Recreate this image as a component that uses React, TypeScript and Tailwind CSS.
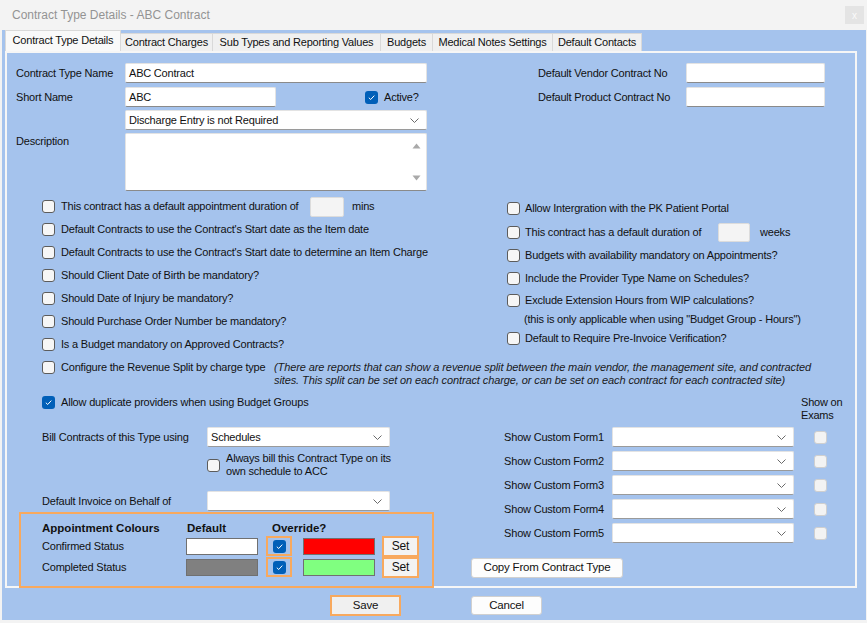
import React from "react";

const ORANGE = "border-[#f8a95e]";

function Check({ checked, disabled }: { checked?: boolean; disabled?: boolean }) {
  if (checked)
    return (
      <span className="w-[13px] h-[13px] rounded-[3px] bg-[#005fb8] flex items-center justify-center shrink-0">
        <svg width="9" height="9" viewBox="0 0 9 9">
          <path d="M1.8 4.7 L3.7 6.5 L7.3 2.6" fill="none" stroke="#ffffff" strokeWidth="1" />
        </svg>
      </span>
    );
  if (disabled)
    return <span className="block w-[13px] h-[13px] rounded-[3px] border border-[#cfcfcf] bg-[#f3f3f3] shrink-0" />;
  return <span className="block w-[13px] h-[13px] rounded-[3px] border border-[#5c5c5c] bg-[#f6f6f6] shrink-0" />;
}

function Input({ w, value, h = "h-[20px]" }: { w: string; value?: string; h?: string }) {
  return (
    <div className={`${w} ${h} bg-white border border-[#e3e3e3] border-b-[#8a8a8a] rounded-[2px] flex items-center pl-[3px] shrink-0`}>
      {value}
    </div>
  );
}

function Chevron() {
  return (
    <svg width="9" height="5" viewBox="0 0 9 5" className="shrink-0">
      <polyline points="0.5,0.5 4.5,4.5 8.5,0.5" fill="none" stroke="#6a6a6a" strokeWidth="1" />
    </svg>
  );
}

function Select({ w, value }: { w: string; value?: string }) {
  return (
    <div className={`${w} h-[20px] bg-white border border-[#e3e3e3] border-b-[#9a9a9a] rounded-[2px] flex items-center pl-[3px] pr-[7px] shrink-0`}>
      <span className="flex-1">{value}</span>
      <Chevron />
    </div>
  );
}

function Row({ children, h = "h-[23px]" }: { children: React.ReactNode; h?: string }) {
  return <div className={`${h} flex items-center`}>{children}</div>;
}

function CheckRow({ label, checked }: { label: string; checked?: boolean }) {
  return (
    <Row>
      <Check checked={checked} />
      <span className="ml-[6px] whitespace-nowrap">{label}</span>
    </Row>
  );
}

function Tab({ label, w, selected }: { label: string; w: string; selected?: boolean }) {
  if (selected)
    return (
      <div className={`${w} h-[21px] pb-[2px] bg-[#f9f9f9] border border-[#d9d9d9] border-b-0 flex items-center justify-center shrink-0 whitespace-nowrap`}>
        {label}
      </div>
    );
  return (
    <div className={`${w} h-[18px] bg-[#f0f0f0] border border-[#d9d9d9] border-b-0 border-l-0 flex items-center justify-center shrink-0 whitespace-nowrap`}>
      {label}
    </div>
  );
}

function Swatch({ color }: { color: string }) {
  return <div className={`w-[72px] h-[17px] border border-[#707070] shrink-0 ${color}`} />;
}

function ColourRow({ label, def, over }: { label: string; def: string; over: string }) {
  return (
    <div className="h-[20px] flex items-center">
      <span className="w-[144px] shrink-0">{label}</span>
      <Swatch color={def} />
      <div className={`ml-[8px] w-[26px] h-[20px] border-2 ${ORANGE} flex items-center justify-center shrink-0`}>
        <Check checked />
      </div>
      <div className="ml-[11px]">
        <Swatch color={over} />
      </div>
      <div className={`ml-[7px] w-[37px] h-[21px] border-2 ${ORANGE} bg-[#f3f3f3] flex items-center justify-center shrink-0 text-[12px]`}>
        Set
      </div>
    </div>
  );
}

function FormRow({ n }: { n: number }) {
  return (
    <div className="h-[20px] flex items-center">
      <span className="w-[133px] text-right shrink-0">Show Custom Form{n}</span>
      <div className="ml-[8px]">
        <Select w="w-[182px]" />
      </div>
      <div className="ml-[20px]">
        <Check disabled />
      </div>
    </div>
  );
}

export default function App() {
  return (
    <div className="w-[867px] h-[623px] bg-[#f3f3f3] flex flex-col font-['Liberation_Sans',Arial,sans-serif] text-[11px] tracking-[-0.2px] text-[#111] overflow-hidden">
      {/* Title bar */}
      <div className="h-[30px] flex items-center pl-[12px] pr-[3px] shrink-0 tracking-normal">
        <span className="text-[12px] text-[#939393]">Contract Type Details - ABC Contract</span>
        <div className="ml-auto w-[19px] h-[18px] bg-[#e4e4e4] flex items-center justify-center text-[10px] text-[#fafafa]">x</div>
      </div>

      {/* Body */}
      <div className="flex-1 ml-[2px] mr-[1px] mb-[3px] bg-[#a5c3ed] flex flex-col">
        {/* Tabs */}
        <div className="h-[21px] pl-[3px] flex items-end shrink-0">
          <Tab label="Contract Type Details" w="w-[116px]" selected />
          <Tab label="Contract Charges" w="w-[92px]" />
          <Tab label="Sub Types and Reporting Values" w="w-[168px]" />
          <Tab label="Budgets" w="w-[52px]" />
          <Tab label="Medical Notes Settings" w="w-[120px]" />
          <Tab label="Default Contacts" w="w-[89px]" />
        </div>

        {/* Panel */}
        <div className="ml-[3px] w-[852px] h-[537px] border-2 border-[#f6f6f6] flex flex-col shrink-0">
          {/* Section A */}
          <div className="mt-[10px] flex">
            <div className="pl-[9px] flex flex-col">
              <div className="h-[20px] flex items-center">
                <span className="w-[109px] shrink-0">Contract Type Name</span>
                <Input w="w-[302px]" value="ABC Contract" />
              </div>
              <div className="mt-[4px] h-[20px] flex items-center">
                <span className="w-[109px] shrink-0">Short Name</span>
                <Input w="w-[151px]" value="ABC" />
                <div className="ml-[89px]">
                  <Check checked />
                </div>
                <span className="ml-[6px]">Active?</span>
              </div>
              <div className="mt-[3px] pl-[109px]">
                <Select w="w-[302px]" value="Discharge Entry is not Required" />
              </div>
              <div className="mt-[3px] flex items-start">
                <span className="w-[109px] shrink-0 leading-[16px]">Description</span>
                <div className="w-[302px] h-[58px] bg-white border border-[#e3e3e3] border-b-[#8a8a8a] rounded-[2px] flex justify-end pr-[5px] py-[9px]">
                  <div className="flex flex-col justify-between items-center">
                    <svg width="9" height="6" viewBox="0 0 9 6">
                      <polygon points="0.5,5.5 4.5,0.5 8.5,5.5" fill="#a9a9a9" />
                    </svg>
                    <svg width="9" height="6" viewBox="0 0 9 6">
                      <polygon points="0.5,0.5 8.5,0.5 4.5,5.5" fill="#a9a9a9" />
                    </svg>
                  </div>
                </div>
              </div>
            </div>
            <div className="ml-[111px] flex flex-col">
              <div className="h-[20px] flex items-center">
                <span className="w-[148px] shrink-0">Default Vendor Contract No</span>
                <Input w="w-[139px]" />
              </div>
              <div className="mt-[4px] h-[20px] flex items-center">
                <span className="w-[148px] shrink-0">Default Product Contract No</span>
                <Input w="w-[139px]" />
              </div>
            </div>
          </div>

          {/* Section B */}
          <div className="mt-[4px] flex">
            <div className="pl-[35px] w-[500px] flex flex-col shrink-0">
              <Row>
                <Check />
                <span className="ml-[6px] w-[249px] whitespace-nowrap">This contract has a default appointment duration of</span>
                <div className="w-[34px] h-[20px] bg-[#f4f4f4] border border-[#dcdcdc] rounded-[2px]" />
                <span className="ml-[8px]">mins</span>
              </Row>
              <CheckRow label="Default Contracts to use the Contract's Start date as the Item date" />
              <CheckRow label="Default Contracts to use the Contract's Start date to determine an Item Charge" />
              <CheckRow label="Should Client Date of Birth be mandatory?" />
              <CheckRow label="Should Date of Injury be mandatory?" />
              <CheckRow label="Should Purchase Order Number be mandatory?" />
              <CheckRow label="Is a Budget mandatory on Approved Contracts?" />
            </div>
            <div className="mt-[1px] flex flex-col">
              <Row h="h-[24px]">
                <Check />
                <span className="ml-[5px] whitespace-nowrap">Allow Intergration with the PK Patient Portal</span>
              </Row>
              <Row h="h-[24px]">
                <Check />
                <span className="ml-[5px] w-[193px] whitespace-nowrap">This contract has a default duration of</span>
                <div className="w-[32px] h-[19px] bg-[#f4f4f4] border border-[#dcdcdc] rounded-[2px]" />
                <span className="ml-[10px]">weeks</span>
              </Row>
              <Row>
                <Check />
                <span className="ml-[5px] whitespace-nowrap">Budgets with availability mandatory on Appointments?</span>
              </Row>
              <Row h="h-[22px]">
                <Check />
                <span className="ml-[5px] whitespace-nowrap">Include the Provider Type Name on Schedules?</span>
              </Row>
              <Row h="h-[22px]">
                <Check />
                <span className="ml-[5px] whitespace-nowrap">Exclude Extension Hours from WIP calculations?</span>
              </Row>
              <div className="h-[16px] leading-[16px] pl-[17px] whitespace-nowrap">
                (this is only applicable when using "Budget Group - Hours")
              </div>
              <Row h="h-[22px]">
                <Check />
                <span className="ml-[5px] whitespace-nowrap">Default to Require Pre-Invoice Verification?</span>
              </Row>
            </div>
          </div>

          {/* Revenue split */}
          <div className="mt-[5px] pl-[35px] flex items-start leading-[13px]">
            <Check />
            <span className="ml-[6px] w-[213px] whitespace-nowrap shrink-0">Configure the Revenue Split by charge type</span>
            <span className="italic whitespace-nowrap text-[#1a1a1a] tracking-[-0.1px]">
              (There are reports that can show a revenue split between the main vendor, the management site, and contracted
              <br />
              sites. This split can be set on each contract charge, or can be set on each contract for each contracted site)
            </span>
          </div>

          {/* Allow duplicate */}
          <div className="mt-[4px] h-[23px] pl-[35px] flex items-start">
            <div className="w-[759px] h-[23px] flex items-center shrink-0">
              <Check checked />
              <span className="ml-[6px]">Allow duplicate providers when using Budget Groups</span>
            </div>
            <div className="mt-[5px] leading-[13px]">
              Show on
              <br />
              Exams
            </div>
          </div>

          {/* Section C */}
          <div className="mt-[13px] flex">
            <div className="w-[464px] flex flex-col shrink-0">
              <div className="pl-[35px] h-[20px] flex items-center">
                <span className="w-[165px] shrink-0">Bill Contracts of this Type using</span>
                <Select w="w-[183px]" value="Schedules" />
              </div>
              <div className="mt-[5px] pl-[200px] flex items-center">
                <Check />
                <span className="ml-[6px] leading-[13px]">
                  Always bill this Contract Type on its
                  <br />
                  own schedule to ACC
                </span>
              </div>
              <div className="mt-[13px] pl-[35px] h-[20px] flex items-center">
                <span className="w-[165px] shrink-0">Default Invoice on Behalf of</span>
                <Select w="w-[183px]" />
              </div>
              <div className={`mt-[1px] ml-[12px] w-[415px] h-[76px] border-2 ${ORANGE} pl-[21px] flex flex-col`}>
                <div className="mt-[7px] h-[15px] flex items-center font-bold text-[11.5px] tracking-[0px]">
                  <span className="w-[145px] shrink-0">Appointment Colours</span>
                  <span className="w-[85px] shrink-0">Default</span>
                  <span>Override?</span>
                </div>
                <ColourRow label="Confirmed Status" def="bg-white" over="bg-[#ff0000]" />
                <div className="mt-[1px]">
                  <ColourRow label="Completed Status" def="bg-[#808080]" over="bg-[#80ff80]" />
                </div>
              </div>
            </div>
            <div className="flex flex-col">
              <FormRow n={1} />
              <div className="mt-[4px]"><FormRow n={2} /></div>
              <div className="mt-[4px]"><FormRow n={3} /></div>
              <div className="mt-[4px]"><FormRow n={4} /></div>
              <div className="mt-[4px]"><FormRow n={5} /></div>
              <div className="mt-[15px] w-[152px] h-[20px] bg-[#fdfdfd] border border-[#d0d0d0] rounded-[3px] flex items-center justify-center text-[11.5px]">
                Copy From Contract Type
              </div>
            </div>
          </div>
        </div>

        {/* Bottom buttons */}
        <div className="mt-[7px] flex items-center">
          <div className={`ml-[328px] w-[71px] h-[21px] border-2 ${ORANGE} bg-[#f0f0f0] flex items-center justify-center text-[11.5px]`}>
            Save
          </div>
          <div className="ml-[70px] w-[71px] h-[19px] bg-[#fdfdfd] border border-[#d0d0d0] rounded-[3px] flex items-center justify-center text-[11.5px]">
            Cancel
          </div>
        </div>
      </div>
    </div>
  );
}
